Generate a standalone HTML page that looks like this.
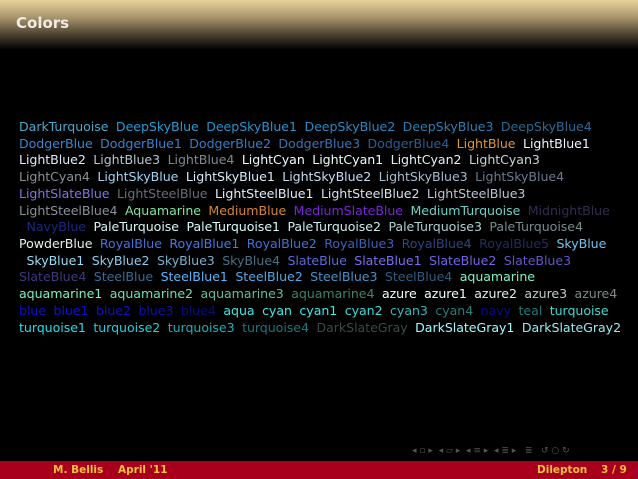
<!DOCTYPE html>
<html><head><meta charset="utf-8"><style>
html,body{margin:0;padding:0;background:#000;width:638px;height:479px;overflow:hidden;font-family:"DejaVu Sans","Liberation Sans",sans-serif;}
.hdr{position:absolute;left:0;top:0;width:638px;height:50px;background:linear-gradient(#e8d29c 0%,#a8946c 35%,#4a4030 70%,#000 100%);}
.title{position:absolute;left:16px;top:14px;color:#f0ece0;font-size:15px;font-weight:bold;font-family:"DejaVu Sans",sans-serif;}
.body{position:absolute;left:19px;top:119px;font-size:12.6px;line-height:16.72px;white-space:nowrap;word-spacing:3.5px;letter-spacing:-0.05px;}
.foot{position:absolute;left:0;top:461px;width:638px;height:18px;background:#a8001c;color:#f4c23a;font-size:10.5px;font-weight:bold;}
.foot span{position:absolute;top:3px;}
.nav{position:absolute;top:446px;color:#555;font-size:9px;}
</style></head><body>
<div class="hdr"></div>
<div class="title">Colors</div>
<div class="body">
<span style="color:#4aa8c8">DarkTurquoise</span> <span style="color:#2a9ad0">DeepSkyBlue</span> <span style="color:#2a92cc">DeepSkyBlue1</span> <span style="color:#2a88c0">DeepSkyBlue2</span> <span style="color:#2a7eb0">DeepSkyBlue3</span> <span style="color:#2a6a94">DeepSkyBlue4</span><br>
<span style="color:#3a86d0">DodgerBlue</span> <span style="color:#3a82d0">DodgerBlue1</span> <span style="color:#3a7cc8">DodgerBlue2</span> <span style="color:#3a72b8">DodgerBlue3</span> <span style="color:#2e5c94">DodgerBlue4</span> <span style="color:#e0943a">LightBlue</span> <span style="color:#f0f4ff">LightBlue1</span><br>
<span style="color:#e0e8f4">LightBlue2</span> <span style="color:#b8c4d0">LightBlue3</span> <span style="color:#7e8890">LightBlue4</span> <span style="color:#f0fcfc">LightCyan</span> <span style="color:#f0fcfc">LightCyan1</span> <span style="color:#e4f0f0">LightCyan2</span> <span style="color:#c8d4d4">LightCyan3</span><br>
<span style="color:#8a9090">LightCyan4</span> <span style="color:#a0d4f0">LightSkyBlue</span> <span style="color:#d8eaf8">LightSkyBlue1</span> <span style="color:#c8dcf0">LightSkyBlue2</span> <span style="color:#a8bcd0">LightSkyBlue3</span> <span style="color:#6a7a8c">LightSkyBlue4</span><br>
<span style="color:#8a70e0">LightSlateBlue</span> <span style="color:#6a6e78">LightSteelBlue</span> <span style="color:#e4ecfc">LightSteelBlue1</span> <span style="color:#d8e0f0">LightSteelBlue2</span> <span style="color:#bcc4d4">LightSteelBlue3</span><br>
<span style="color:#8a9098">LightSteelBlue4</span> <span style="color:#80e0a0">Aquamarine</span> <span style="color:#d8843a">MediumBlue</span> <span style="color:#7a24d8">MediumSlateBlue</span> <span style="color:#70d0c8">MediumTurquoise</span> <span style="color:#302c50">MidnightBlue</span><br>
<span style="color:#1c2880">&nbsp;NavyBlue</span> <span style="color:#d8f4f4">PaleTurquoise</span> <span style="color:#d8fcfc">PaleTurquoise1</span> <span style="color:#ccecec">PaleTurquoise2</span> <span style="color:#b0d0d0">PaleTurquoise3</span> <span style="color:#788c8c">PaleTurquoise4</span><br>
<span style="color:#e4f0f0">PowderBlue</span> <span style="color:#4870d8">RoyalBlue</span> <span style="color:#4878e8">RoyalBlue1</span> <span style="color:#4470d8">RoyalBlue2</span> <span style="color:#3e60b8">RoyalBlue3</span> <span style="color:#2e4480">RoyalBlue4</span> <span style="color:#1e2e60">RoyalBlue5</span> <span style="color:#70c4ec">SkyBlue</span><br>
<span style="color:#98dcf8">&nbsp;SkyBlue1</span> <span style="color:#8cccec">SkyBlue2</span> <span style="color:#7cb0cc">SkyBlue3</span> <span style="color:#4a7084">SkyBlue4</span> <span style="color:#5a6ad8">SlateBlue</span> <span style="color:#7a6cf8">SlateBlue1</span> <span style="color:#7264e8">SlateBlue2</span> <span style="color:#6454c8">SlateBlue3</span><br>
<span style="color:#3e3880">SlateBlue4</span> <span style="color:#3a6c94">SteelBlue</span> <span style="color:#5ab4f8">SteelBlue1</span> <span style="color:#54a8e8">SteelBlue2</span> <span style="color:#4890c8">SteelBlue3</span> <span style="color:#305c84">SteelBlue4</span> <span style="color:#80f0c4">aquamarine</span><br>
<span style="color:#7cf0c8">aquamarine1</span> <span style="color:#72dcb8">aquamarine2</span> <span style="color:#62bc9e">aquamarine3</span> <span style="color:#44806c">aquamarine4</span> <span style="color:#f0ffff">azure</span> <span style="color:#f0ffff">azure1</span> <span style="color:#e0eeee">azure2</span> <span style="color:#c0cccc">azure3</span> <span style="color:#808888">azure4</span><br>
<span style="color:#1010c8">blue</span> <span style="color:#1010d0">blue1</span> <span style="color:#1010c0">blue2</span> <span style="color:#1010a8">blue3</span> <span style="color:#0c0c78">blue4</span> <span style="color:#40e8e8">aqua</span> <span style="color:#40e8e8">cyan</span> <span style="color:#40e8e8">cyan1</span> <span style="color:#3cd8d8">cyan2</span> <span style="color:#34b8b8">cyan3</span> <span style="color:#247c7c">cyan4</span> <span style="color:#0c0c78">navy</span> <span style="color:#207878">teal</span> <span style="color:#40d8d0">turquoise</span><br>
<span style="color:#20e0e8">turquoise1</span> <span style="color:#20d0d8">turquoise2</span> <span style="color:#1cb0b8">turquoise3</span> <span style="color:#18787c">turquoise4</span> <span style="color:#3a4a4a">DarkSlateGray</span> <span style="color:#a0fcfc">DarkSlateGray1</span> <span style="color:#94ecec">DarkSlateGray2</span>
</div>
<div class="nav" style="left:412px">◂ ▫ ▸ &nbsp;◂ ▱ ▸ &nbsp;◂ ≡ ▸ &nbsp;◂ ≣ ▸ &nbsp; ≣ &nbsp; ↺ ○ ↻</div>
<div class="foot"><span style="left:53px">M. Bellis</span><span style="left:118px">April '11</span><span style="left:537px">Dilepton</span><span style="left:601px">3 / 9</span></div>
</body></html>
